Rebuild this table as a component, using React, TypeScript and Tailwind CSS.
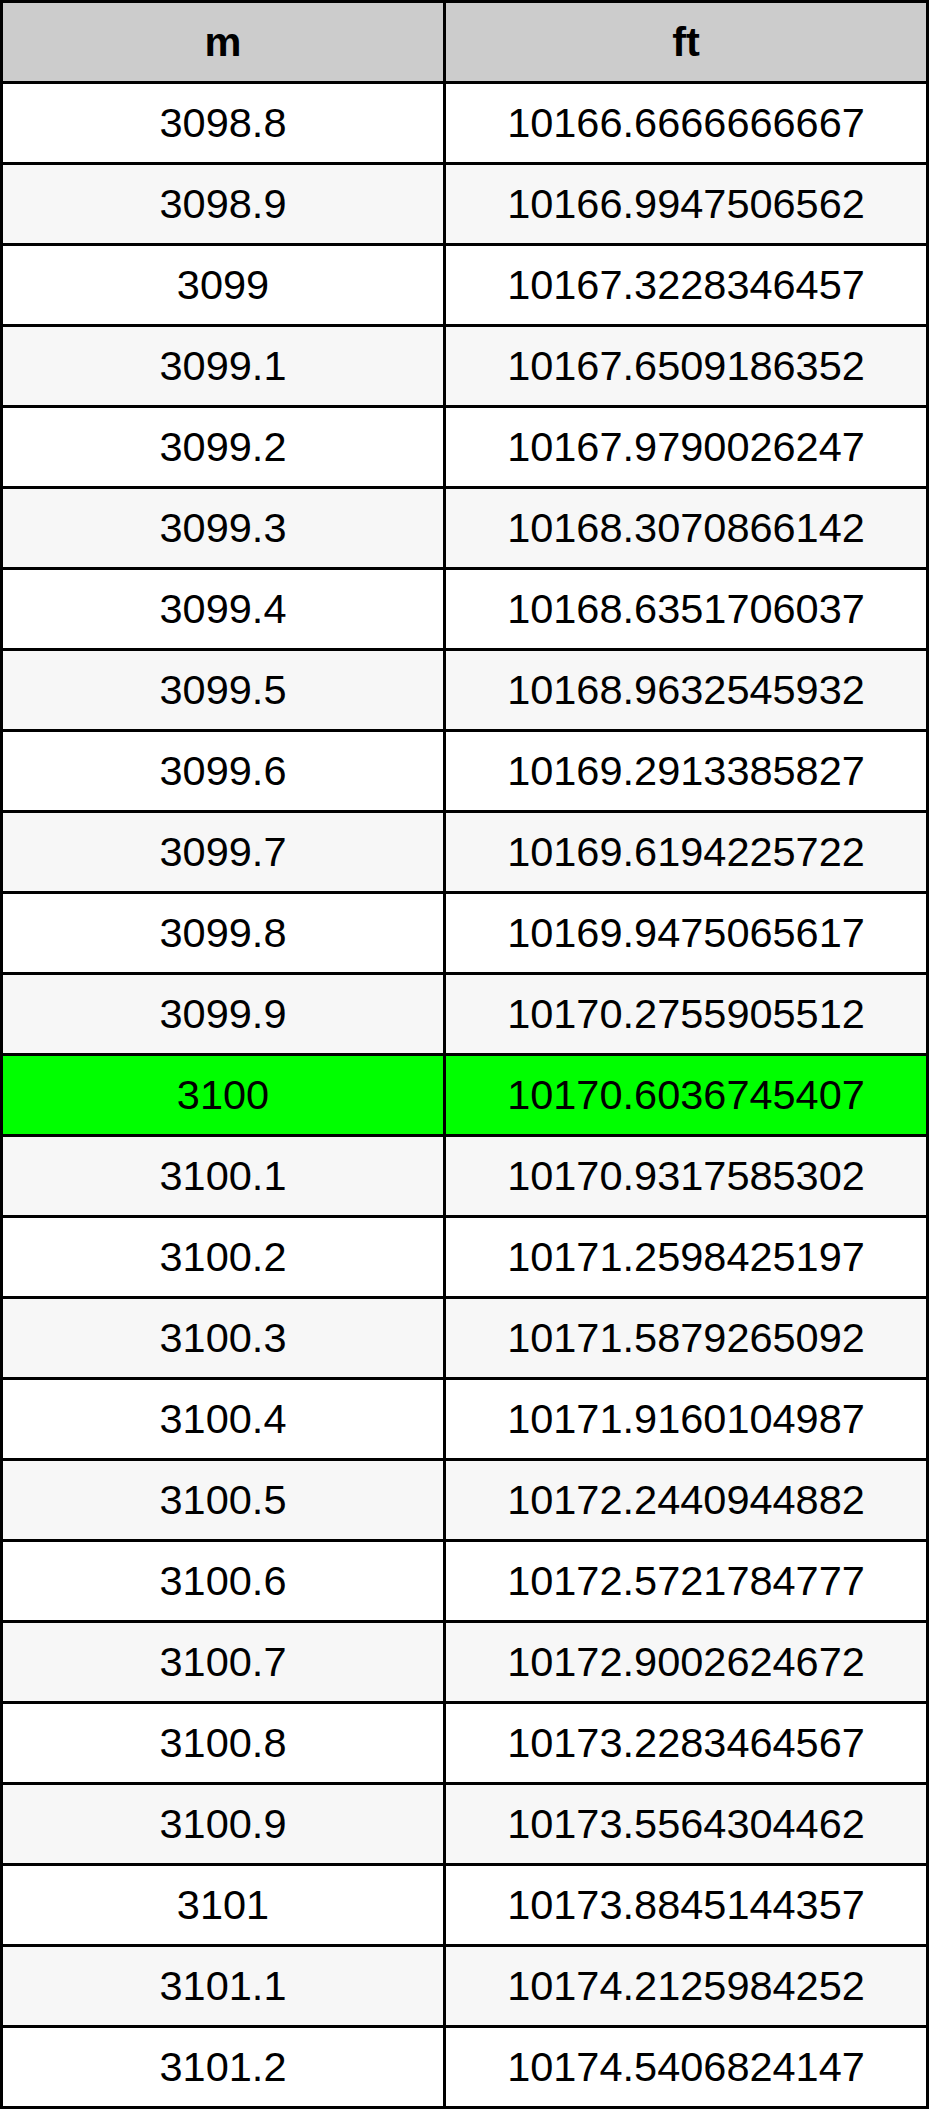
import React from "react";

const rows: [string, string][] = [
  ["3098.8", "10166.6666666667"],
  ["3098.9", "10166.9947506562"],
  ["3099", "10167.3228346457"],
  ["3099.1", "10167.6509186352"],
  ["3099.2", "10167.9790026247"],
  ["3099.3", "10168.3070866142"],
  ["3099.4", "10168.6351706037"],
  ["3099.5", "10168.9632545932"],
  ["3099.6", "10169.2913385827"],
  ["3099.7", "10169.6194225722"],
  ["3099.8", "10169.9475065617"],
  ["3099.9", "10170.2755905512"],
  ["3100", "10170.6036745407"],
  ["3100.1", "10170.9317585302"],
  ["3100.2", "10171.2598425197"],
  ["3100.3", "10171.5879265092"],
  ["3100.4", "10171.9160104987"],
  ["3100.5", "10172.2440944882"],
  ["3100.6", "10172.5721784777"],
  ["3100.7", "10172.9002624672"],
  ["3100.8", "10173.2283464567"],
  ["3100.9", "10173.5564304462"],
  ["3101", "10173.8845144357"],
  ["3101.1", "10174.2125984252"],
  ["3101.2", "10174.5406824147"],
];

export default function App() {
  return (
    <div className="bg-white w-[930px] h-[2115px]" style={{ fontFamily: '"Liberation Sans", Arial, sans-serif' }}>
      <div className="w-[929px] border-[3px] border-black text-black text-[41.5px] leading-none">
        <div className="flex h-[78px] bg-[#cccccc] font-bold">
          <div className="w-[443px] border-r-[3px] border-black flex items-center justify-center">m</div>
          <div className="flex-1 flex items-center justify-center">ft</div>
        </div>
        {rows.map(([m, ft], i) => {
          const bg = m === "3100" ? "bg-[#00ff00]" : i % 2 === 1 ? "bg-[#f7f7f7]" : "bg-white";
          return (
            <div key={m} className={`flex h-[81px] border-t-[3px] border-black ${bg}`}>
              <div className="w-[443px] border-r-[3px] border-black flex items-center justify-center">{m}</div>
              <div className="flex-1 flex items-center justify-center">{ft}</div>
            </div>
          );
        })}
      </div>
    </div>
  );
}
